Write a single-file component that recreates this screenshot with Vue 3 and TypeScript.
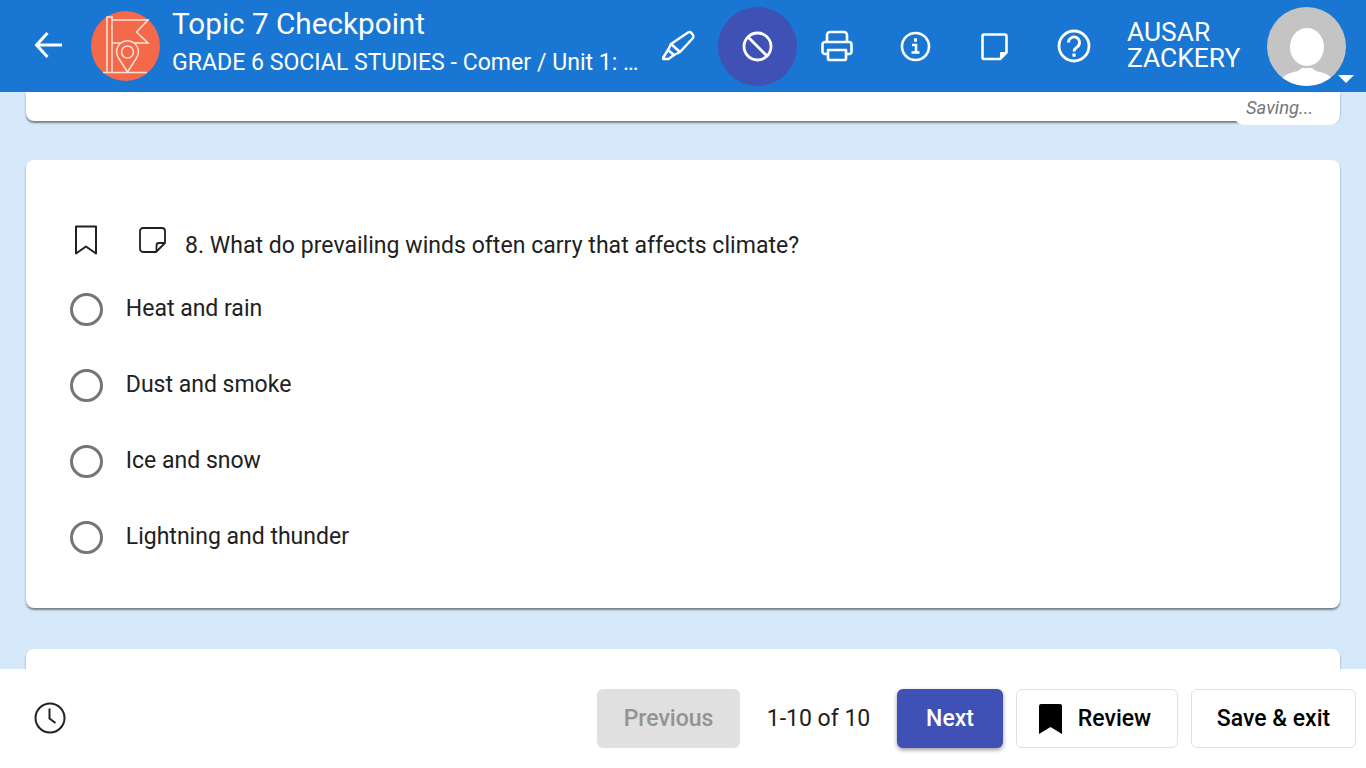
<template>
  <div class="page">
    <header class="top-bar">
      <button class="back-btn" aria-label="Back">
        <svg width="30" height="28" viewBox="0 0 30 28" fill="none" stroke="#fff" stroke-width="3">
          <path d="M29 14H4M14.500 2 3.500 14l11 12" />
        </svg>
      </button>
      <div class="logo">
        <svg width="69" height="70" viewBox="0 0 69 70" fill="none" stroke="#fde3da" stroke-width="1.500">
          <path d="M16 61V6h5v55M21 9h36L45.500 21 57 32H21" />
          <path d="M12 61.500h44" />
          <path d="M36.500 61 27.500 47a11 11 0 1 1 18 0Z" fill="#f4694a" />
          <circle cx="36.500" cy="41" r="6" />
        </svg>
      </div>
      <div class="titles">
        <div class="title">Topic 7 Checkpoint</div>
        <div class="subtitle">GRADE 6 SOCIAL STUDIES - Comer / Unit 1: Geography and Climate</div>
      </div>
      <div class="tools">
        <button class="tool" aria-label="Highlighter">
          <svg width="34" height="34" viewBox="0 0 34 34" fill="none" stroke="#fff" stroke-width="2.500" stroke-linejoin="round">
            <path d="M9 15 26 3.500q2-1 3 0l2 2.500q1 1.500 0 3L18 23Z" />
            <path d="M9 15 6 21l6 5 6-3" />
            <path d="M6 21 1.200 28.500V30h5.300l5.500-4" />
          </svg>
        </button>
        <button class="tool tool-active" aria-label="Disable">
          <svg width="31" height="31" viewBox="0 0 31 31" fill="none" stroke="#fff" stroke-width="2.800">
            <circle cx="15.500" cy="15.500" r="13.500" />
            <path d="M6 6 25 25" />
          </svg>
        </button>
        <button class="tool" aria-label="Print">
          <svg width="32" height="32" viewBox="0 0 32 32" fill="none" stroke="#fff" stroke-width="2.600" stroke-linejoin="round">
            <path d="M6 12V5a3 3 0 0 1 3-3h14a3 3 0 0 1 3 3v7" />
            <path d="M7 24H4a2.500 2.500 0 0 1-2.500-2.500v-7A2.500 2.500 0 0 1 4 12h24a2.500 2.500 0 0 1 2.500 2.500v7A2.500 2.500 0 0 1 28 24h-3" />
            <path d="M7 20h18v9a1 1 0 0 1-1 1H8a1 1 0 0 1-1-1Z" />
          </svg>
        </button>
        <button class="tool" aria-label="Info">
          <svg width="31" height="31" viewBox="0 0 31 31" fill="none" stroke="#fff" stroke-width="2.600">
            <circle cx="15.500" cy="15.500" r="13.500" />
            <path d="M12 14h4v7M11.500 21.500h8" />
            <path d="M14 9h3" stroke-width="3.400" />
          </svg>
        </button>
        <button class="tool" aria-label="Notes">
          <svg width="29" height="29" viewBox="0 0 29 29" fill="none" stroke="#fff" stroke-width="2.600" stroke-linejoin="round">
            <path d="M4 2.500h21a1.500 1.500 0 0 1 1.500 1.500v16.500L20 27H4a1.500 1.500 0 0 1-1.500-1.500V4A1.500 1.500 0 0 1 4 2.500Z" />
            <path d="M20.500 26.500v-6h6Z" fill="#fff" stroke-width="1" />
          </svg>
        </button>
        <button class="tool" aria-label="Help">
          <svg width="34" height="34" viewBox="0 0 34 34" fill="none" stroke="#fff" stroke-width="2.800">
            <circle cx="17" cy="17" r="15" />
            <path d="M11.500 13.500a5.500 5.500 0 1 1 8.800 4.400c-2 1.500-3.300 2.300-3.300 4.600" />
            <path d="M17 24.500v3.200" stroke-width="3.200" />
          </svg>
        </button>
      </div>
      <div class="user-name">AUSAR<br />ZACKERY</div>
      <div class="avatar">
        <svg width="79" height="79" viewBox="0 0 79 79">
          <defs>
            <clipPath id="avatar-clip">
              <circle cx="39.500" cy="39.500" r="39.500" />
            </clipPath>
          </defs>
          <circle cx="39.500" cy="39.500" r="39.500" fill="#c4c4c4" />
          <g clip-path="url(#avatar-clip)" fill="#fff">
            <ellipse cx="40" cy="40" rx="17" ry="19" />
            <path d="M13 79c0-11 9-13 18-15l4-3h10l4 3c9 2 18 4 18 15Z" />
          </g>
        </svg>
        <span class="caret"></span>
      </div>
    </header>

    <main class="content">
      <div class="saving">Saving...</div>
      <section class="card card-prev"></section>
      <section class="card question">
        <div class="question-row">
          <svg class="q-bookmark" width="24" height="30" viewBox="0 0 24 30" fill="none" stroke="#212121" stroke-width="2" stroke-linejoin="round">
            <path d="M2 1.500h20v27l-10-7-10 7Z" />
          </svg>
          <svg class="q-note" width="29" height="28" viewBox="0 0 29 28" fill="none" stroke="#212121" stroke-width="1.800" stroke-linejoin="round">
            <path d="M5 2h19a3 3 0 0 1 3 3v12l-9 9H5a3 3 0 0 1-3-3V5a3 3 0 0 1 3-3Z" />
            <path d="M27 17h-6a2.500 2.500 0 0 0-2.500 2.500V26" />
          </svg>
          <span class="q-text">8. What do prevailing winds often carry that affects climate?</span>
        </div>
        <label v-for="opt in options" :key="opt" class="option">
          <span class="radio"></span>
          <span class="option-text">{{ opt }}</span>
        </label>
      </section>
      <section class="card card-next"></section>
    </main>

    <footer class="bottom-bar">
      <svg class="clock" width="32" height="32" viewBox="0 0 32 32" fill="none" stroke="#212121" stroke-width="2">
        <circle cx="16" cy="16" r="14.500" />
        <path d="M15.500 6.500v10l6 4.500" />
      </svg>
      <button class="btn btn-disabled" disabled>Previous</button>
      <span class="page-count">1-10 of 10</span>
      <button class="btn btn-primary">Next</button>
      <button class="btn btn-outline btn-review">
        <svg width="23" height="30" viewBox="0 0 23 30">
          <path d="M2 0h19a2 2 0 0 1 2 2v28l-11.500-7L0 30V2a2 2 0 0 1 2-2Z" fill="#000" />
        </svg>
        Review
      </button>
      <button class="btn btn-outline btn-save">Save &amp; exit</button>
    </footer>
  </div>
</template>

<script setup lang="ts">
const options: string[] = [
  'Heat and rain',
  'Dust and smoke',
  'Ice and snow',
  'Lightning and thunder'
]
</script>

<style>
html,
body {
  margin: 0;
  overflow: hidden;
}
</style>

<style scoped>
.page {
  height: 768px;
  display: flex;
  flex-direction: column;
  font-family: Roboto, "Liberation Sans", sans-serif;
  color: #212121;
  background: #d6e9fb;
}

button {
  font-family: inherit;
  border: none;
  background: none;
  padding: 0;
}

.top-bar {
  height: 92px;
  flex: none;
  display: flex;
  align-items: center;
  background: #1976d2;
  color: #fff;
  box-sizing: border-box;
  position: relative;
  z-index: 2;
}

.back-btn {
  display: flex;
  margin-left: 33px;
  margin-top: -2px;
  width: 30px;
}

.logo {
  width: 69px;
  height: 70px;
  border-radius: 50%;
  background: #f4694a;
  margin-left: 28px;
  flex: none;
}

.titles {
  width: 467px;
  margin-left: 12px;
  margin-top: -5px;
  flex: none;
}

.title {
  font-size: 29.7px;
  line-height: 38px;
}

.subtitle {
  font-size: 23.1px;
  line-height: 38px;
  margin-top: 1px;
  white-space: nowrap;
  overflow: hidden;
  text-overflow: ellipsis;
}

.tools {
  display: flex;
  align-items: center;
}

.tool {
  width: 79px;
  height: 79px;
  border-radius: 50%;
  display: flex;
  align-items: center;
  justify-content: center;
  flex: none;
}

.tool-active {
  background: #3f51b5;
}

.user-name {
  font-size: 26.4px;
  line-height: 26px;
  margin-left: 14px;
  margin-right: 1px;
  margin-top: -2px;
  width: 139px;
  flex: none;
}

.avatar {
  width: 79px;
  height: 79px;
  position: relative;
  flex: none;
}

.avatar svg {
  display: block;
}

.caret {
  position: absolute;
  right: -8px;
  bottom: 3px;
  border-left: 8px solid transparent;
  border-right: 8px solid transparent;
  border-top: 8px solid #fff;
}

.content {
  flex: 1;
  min-height: 0;
  overflow: hidden;
  padding: 0 26px;
  position: relative;
  display: flex;
  flex-direction: column;
  gap: 39px;
}

.card {
  background: #fff;
  border-radius: 8px;
  box-shadow: 0 2px 2px rgba(0, 0, 0, 0.45);
  flex: none;
  box-sizing: border-box;
}

.card-prev {
  height: 29px;
  border-radius: 0 0 8px 8px;
}

.card-next {
  height: 40px;
  margin-top: 2px;
}

.saving {
  position: absolute;
  top: 0;
  right: 26px;
  width: 106px;
  height: 33px;
  box-sizing: border-box;
  padding-left: 12px;
  background: #fff;
  border-radius: 0 0 10px 10px;
  font-size: 18.4px;
  font-style: italic;
  line-height: 31px;
  color: #757575;
  z-index: 1;
}

.question {
  height: 448px;
  padding: 65px 0 0 44px;
}

.question-row {
  display: flex;
  align-items: center;
  height: 30px;
  font-size: 23px;
}

.q-bookmark {
  margin-left: 4px;
}

.q-note {
  margin-left: 40px;
}

.q-text {
  margin-left: 18px;
  margin-top: 10px;
  letter-spacing: 0.04px;
}

.option {
  display: flex;
  align-items: center;
  height: 76px;
  font-size: 23px;
  gap: 22.8px;
}

.option-text {
  margin-top: -2px;
}

.question-row + .option {
  margin-top: 16px;
}

.radio {
  width: 33px;
  height: 33px;
  border: 3px solid #757575;
  border-radius: 50%;
  box-sizing: border-box;
  flex: none;
}

.bottom-bar {
  height: 99px;
  flex: none;
  display: flex;
  align-items: center;
  background: #fff;
  padding: 0 10px 0 34px;
  position: relative;
  z-index: 2;
}

.clock {
  margin-right: auto;
  margin-top: -2px;
}

.btn {
  height: 59px;
  border-radius: 6px;
  font-size: 23px;
  font-weight: 500;
  display: flex;
  align-items: center;
  justify-content: center;
  box-sizing: border-box;
  color: #000;
}

.btn-disabled {
  width: 143px;
  background: #e0e0e0;
  color: #939393;
}

.page-count {
  width: 157px;
  text-align: center;
  font-size: 23px;
}

.btn-primary {
  width: 106px;
  background: #3f51b5;
  color: #fff;
  box-shadow: 0 2px 4px rgba(0, 0, 0, 0.4);
}

.btn-outline {
  border: 1px solid #e0e0e0;
  background: #fff;
}

.btn-review {
  width: 162px;
  margin-left: 13px;
  gap: 16px;
  padding-right: 4px;
}

.btn-save {
  width: 165px;
  margin-left: 13px;
}
</style>
